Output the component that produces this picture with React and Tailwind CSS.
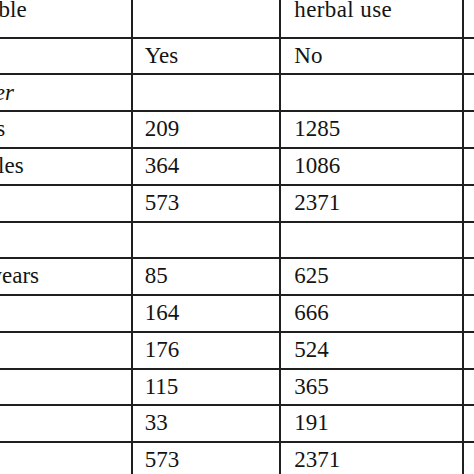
import React from "react";

const rows = [
  { label: "Gender", italic: true, a: "", b: "", shift: "-ml-[9px]" },
  { label: "Males", a: "209", b: "1285", shift: "-ml-[5px]" },
  { label: "Females", a: "364", b: "1086", shift: "-ml-[7px]" },
  { label: "Total", a: "573", b: "2371", shift: "-ml-[11px]" },
  { label: "Age", italic: true, a: "", b: "", shift: "-ml-[9px]" },
  { label: "< 20 years", a: "85", b: "625", shift: "-ml-[11px]" },
  { label: "20-29", a: "164", b: "666", shift: "-ml-[11px]" },
  { label: "30-39", a: "176", b: "524", shift: "-ml-[11px]" },
  { label: "40-49", a: "115", b: "365", shift: "-ml-[11px]" },
  { label: "≥ 50", a: "33", b: "191", shift: "-ml-[11px]" },
  { label: "Total", a: "573", b: "2371", shift: "-ml-[11px]" },
];

const cols = "grid grid-cols-[192.7px_148.6px_183px_115.7px] border-b-2 border-[#1f1f1f]";

export default function App() {
  return (
    <div
      className="w-[474px] h-[474px] overflow-hidden bg-white text-[#141414] text-[23px]"
      style={{ fontFamily: '"Liberation Serif", "Times New Roman", serif' }}
    >
      <div className="-ml-[60px] w-[640px]">
        {/* header row */}
        <div className={`${cols} h-[38.7px] grid-rows-[36.7px]`}>
          <div className="flex items-end pl-[14px] pb-[14px] leading-[26px] border-r-2 border-[#1f1f1f] whitespace-nowrap">
            <span className="-ml-[4px]">Variable</span>
          </div>
          <div className="border-r-2 border-[#1f1f1f]"></div>
          <div className="flex items-end pl-[13px] pb-[14px] leading-[26px] border-r-2 border-[#1f1f1f] whitespace-nowrap">
            <div className="tracking-[0.4px]">
              <div>Prevalence of</div>
              <div>herbal use</div>
            </div>
          </div>
          <div></div>
        </div>
        {/* Yes / No row */}
        <div className={`${cols} h-[36.78px] grid-rows-[34.78px]`}>
          <div className="border-r-2 border-[#1f1f1f]"></div>
          <div className="flex items-center pl-[12px] border-r-2 border-[#1f1f1f]">Yes</div>
          <div className="flex items-center pl-[13px] border-r-2 border-[#1f1f1f]">No</div>
          <div></div>
        </div>
        {rows.map((r, i) => (
          <div key={i} className={`${cols} h-[36.78px] grid-rows-[34.78px]`}>
            <div className="flex items-center pl-[14px] border-r-2 border-[#1f1f1f] whitespace-nowrap">
              <span className={`${r.shift} ${r.italic ? "italic" : ""}`}>{r.label}</span>
            </div>
            <div className="flex items-center pl-[12px] border-r-2 border-[#1f1f1f]">{r.a}</div>
            <div className="flex items-center pl-[13px] border-r-2 border-[#1f1f1f]">{r.b}</div>
            <div></div>
          </div>
        ))}
      </div>
    </div>
  );
}
